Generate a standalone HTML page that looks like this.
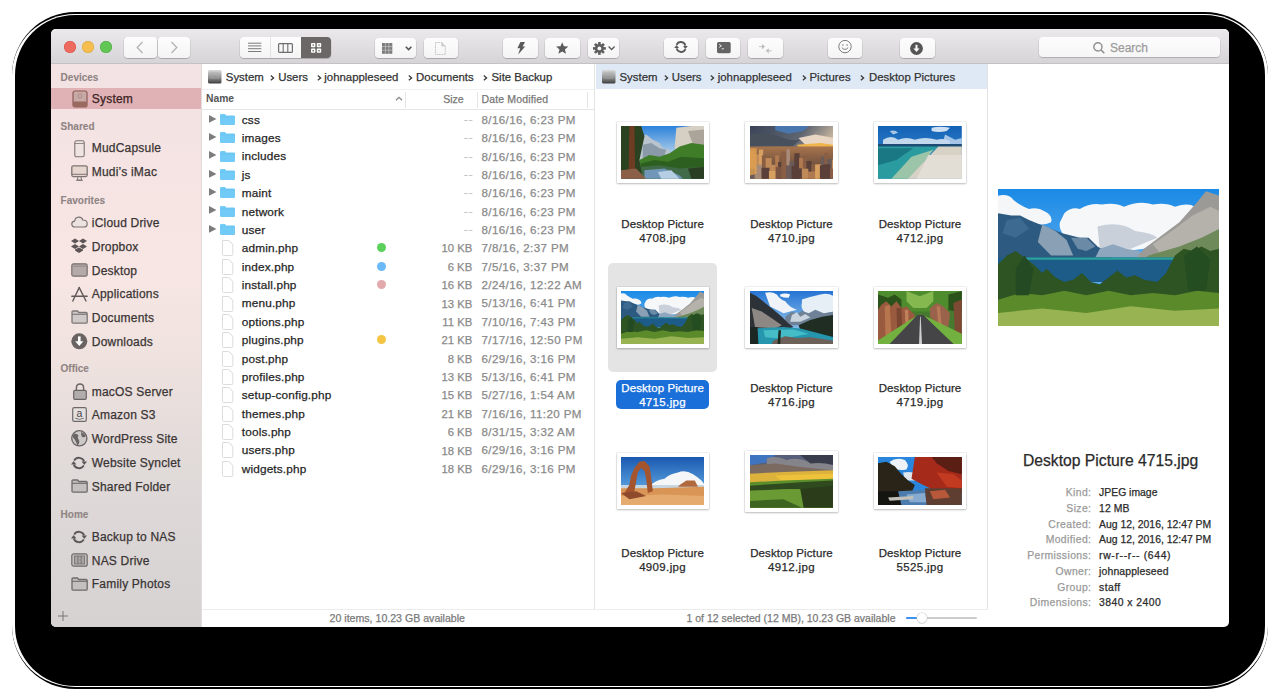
<!DOCTYPE html>
<html><head><meta charset="utf-8"><style>
html,body{margin:0;padding:0;}
body{width:1279px;height:700px;position:relative;overflow:hidden;background:#fff;font-family:"Liberation Sans", sans-serif;}
.t{position:absolute;white-space:nowrap;-webkit-text-stroke:0.25px currentColor;}
.b{position:absolute;box-sizing:border-box;}
svg{position:absolute;overflow:visible;}
</style></head><body>

<div class="b" style="left:12px;top:12px;width:1256px;height:677px;border-top:2px solid #000;border-bottom:2px solid #000;border-left:0 solid #000;border-right:0 solid #000;border-radius:63px;"></div>
<div class="b" style="left:15px;top:15px;width:1250px;height:671px;background:#000;border-radius:60px;"></div>
<div class="b" style="left:51px;top:29px;width:1178px;height:598px;background:#fff;border-radius:5px;overflow:hidden;"></div>
<div class="b" style="left:51px;top:29px;width:1178px;height:35px;background:linear-gradient(#ebe9eb,#d6d4d6);border-top-left-radius:5px;border-top-right-radius:5px;border-bottom:1px solid #c4c2c4;"></div>
<div class="b" style="left:63.5px;top:41.2px;width:12px;height:12px;border-radius:50%;background:#ee6a5f;box-shadow:inset 0 0 0 0.5px #d65248;"></div>
<div class="b" style="left:81.8px;top:41.2px;width:12px;height:12px;border-radius:50%;background:#f5be4f;box-shadow:inset 0 0 0 0.5px #d8a23a;"></div>
<div class="b" style="left:100px;top:41.2px;width:12px;height:12px;border-radius:50%;background:#62c655;box-shadow:inset 0 0 0 0.5px #4ea83f;"></div>
<div class="b" style="left:124px;top:37px;width:33px;height:20.5px;background:linear-gradient(#fdfdfd,#f4f4f4);border-radius:4px;box-shadow:0 0.5px 0 0.5px rgba(0,0,0,0.13),0 1px 1px rgba(0,0,0,0.10);"></div>
<div class="b" style="left:158px;top:37px;width:32px;height:20.5px;background:linear-gradient(#fdfdfd,#f4f4f4);border-radius:4px;box-shadow:0 0.5px 0 0.5px rgba(0,0,0,0.13),0 1px 1px rgba(0,0,0,0.10);"></div>
<svg style="left:136px;top:41px" width="8" height="13"><path d="M6.5 1L1.2 6.5L6.5 12" fill="none" stroke="#b4b4b4" stroke-width="1.3"/></svg>
<svg style="left:170px;top:41px" width="8" height="13"><path d="M1.5 1L6.8 6.5L1.5 12" fill="none" stroke="#b4b4b4" stroke-width="1.3"/></svg>
<div class="b" style="left:240px;top:37px;width:91px;height:20.6px;background:linear-gradient(#fdfdfd,#f4f4f4);border-radius:4px;box-shadow:0 0.5px 0 0.5px rgba(0,0,0,0.13),0 1px 1px rgba(0,0,0,0.10);"></div>
<div class="b" style="left:270px;top:37px;width:1px;height:20.6px;background:#e3e3e3;"></div>
<div class="b" style="left:300.7px;top:37px;width:30.30000000000001px;height:20.6px;background:#6b6767;border-top-right-radius:4px;border-bottom-right-radius:4px;"></div>
<svg style="left:248px;top:42px" width="14" height="11"><path d="M0 1.2H13.3M0 3.9H13.3M0 6.7H13.3M0 9.5H13.3" stroke="#7a7a7a" stroke-width="1"/></svg>
<svg style="left:278px;top:42.5px" width="15" height="10"><rect x="0.6" y="0.6" width="13.8" height="8.8" rx="1" fill="none" stroke="#6e6e6e" stroke-width="1.2"/><path d="M5.2 0.6V9.4M9.8 0.6V9.4" stroke="#6e6e6e" stroke-width="1.1"/></svg>
<svg style="left:310.5px;top:42.8px" width="11" height="10"><g fill="#fff"><rect x="0" y="0" width="4.4" height="4.2" rx="0.8"/><rect x="5.8" y="0" width="4.4" height="4.2" rx="0.8"/><rect x="0" y="5.6" width="4.4" height="4.2" rx="0.8"/><rect x="5.8" y="5.6" width="4.4" height="4.2" rx="0.8"/></g><g fill="#6b6767"><rect x="1.5" y="1.4" width="1.4" height="1.4"/><rect x="7.3" y="1.4" width="1.4" height="1.4"/><rect x="1.5" y="7" width="1.4" height="1.4"/><rect x="7.3" y="7" width="1.4" height="1.4"/></g></svg>
<div class="b" style="left:375px;top:38px;width:41px;height:19.799999999999997px;background:linear-gradient(#fdfdfd,#f4f4f4);border-radius:4px;box-shadow:0 0.5px 0 0.5px rgba(0,0,0,0.13),0 1px 1px rgba(0,0,0,0.10);"></div>
<svg style="left:381.7px;top:43.2px" width="11" height="11"><rect x="0" y="0" width="10.3" height="10.8" fill="#7c7c7c"/><path d="M0 3.6H10.3M0 7.2H10.3M3.4 0V10.8M6.9 0V10.8" stroke="#c9c9c9" stroke-width="0.7"/></svg>
<svg style="left:405px;top:45.8px" width="8" height="5"><path d="M0.8 0.8L3.6 3.6L6.4 0.8" fill="none" stroke="#555" stroke-width="1.6"/></svg>
<div class="b" style="left:424px;top:38px;width:34.30000000000001px;height:19.799999999999997px;background:linear-gradient(#fdfdfd,#f4f4f4);border-radius:4px;box-shadow:0 0.5px 0 0.5px rgba(0,0,0,0.13),0 1px 1px rgba(0,0,0,0.10);"></div>
<svg style="left:435px;top:41.5px" width="11" height="13"><path d="M0.5 0.5H6.8L10.3 4V12.5H0.5Z" fill="none" stroke="#c4c4c4" stroke-width="1" stroke-dasharray="1.2 0.6"/><path d="M6.8 0.5V4H10.3" fill="#d0d0d0" stroke="#c4c4c4" stroke-width="0.8"/></svg>
<div class="b" style="left:503px;top:38px;width:34.60000000000002px;height:19.5px;background:linear-gradient(#fdfdfd,#f4f4f4);border-radius:4px;box-shadow:0 0.5px 0 0.5px rgba(0,0,0,0.13),0 1px 1px rgba(0,0,0,0.10);"></div>
<svg style="left:516.5px;top:41.8px" width="8" height="13"><path d="M3.4 0H8L5.6 4.5H8.2L1.2 12.4L3.2 6.3H0.4Z" fill="#5a5a5a"/></svg>
<div class="b" style="left:545px;top:38px;width:35px;height:19.5px;background:linear-gradient(#fdfdfd,#f4f4f4);border-radius:4px;box-shadow:0 0.5px 0 0.5px rgba(0,0,0,0.13),0 1px 1px rgba(0,0,0,0.10);"></div>
<svg style="left:556px;top:42px" width="13" height="13"><path d="M6.2 0.2L7.9 4.3L12.3 4.6L8.9 7.4L10 11.8L6.2 9.4L2.4 11.8L3.5 7.4L0.1 4.6L4.5 4.3Z" fill="#5a5a5a"/></svg>
<div class="b" style="left:587.8px;top:38px;width:31.40000000000009px;height:19.5px;background:linear-gradient(#fdfdfd,#f4f4f4);border-radius:4px;box-shadow:0 0.5px 0 0.5px rgba(0,0,0,0.13),0 1px 1px rgba(0,0,0,0.10);"></div>
<svg style="left:592.6px;top:41.8px" width="13" height="13" viewBox="0 0 13 13"><g fill="#5e5e5e" transform="translate(6.4 6.4)"><rect x="-1.3" y="-6.4" width="2.6" height="3" transform="rotate(0)"/><rect x="-1.3" y="-6.4" width="2.6" height="3" transform="rotate(45)"/><rect x="-1.3" y="-6.4" width="2.6" height="3" transform="rotate(90)"/><rect x="-1.3" y="-6.4" width="2.6" height="3" transform="rotate(135)"/><rect x="-1.3" y="-6.4" width="2.6" height="3" transform="rotate(180)"/><rect x="-1.3" y="-6.4" width="2.6" height="3" transform="rotate(225)"/><rect x="-1.3" y="-6.4" width="2.6" height="3" transform="rotate(270)"/><rect x="-1.3" y="-6.4" width="2.6" height="3" transform="rotate(315)"/><circle r="4.4"/></g><circle cx="6.4" cy="6.4" r="1.9" fill="#f8f8f8"/></svg>
<svg style="left:608px;top:46px" width="8" height="5"><path d="M0.6 0.6L3.6 3.6L6.6 0.6" fill="none" stroke="#5e5e5e" stroke-width="1.4"/></svg>
<div class="b" style="left:664px;top:38px;width:34px;height:19.6px;background:linear-gradient(#fdfdfd,#f4f4f4);border-radius:4px;box-shadow:0 0.5px 0 0.5px rgba(0,0,0,0.13),0 1px 1px rgba(0,0,0,0.10);"></div>
<svg style="left:674px;top:41.4px" width="14" height="12" viewBox="0 0 14 12"><path d="M11.3 4.6A4.6 4.6 0 0 0 2.6 3.8" fill="none" stroke="#5a5a5a" stroke-width="1.9"/><path d="M2.7 7.4A4.6 4.6 0 0 0 11.4 8.2" fill="none" stroke="#5a5a5a" stroke-width="1.9"/><path d="M9 4.9H13.8L11.4 8Z" fill="#5a5a5a"/><path d="M0.2 7.1H5L2.6 4Z" fill="#5a5a5a"/></svg>
<div class="b" style="left:706.2px;top:38px;width:34.09999999999991px;height:19.6px;background:linear-gradient(#fdfdfd,#f4f4f4);border-radius:4px;box-shadow:0 0.5px 0 0.5px rgba(0,0,0,0.13),0 1px 1px rgba(0,0,0,0.10);"></div>
<svg style="left:716.6px;top:41.6px" width="14" height="12"><rect x="0" y="0" width="13.7" height="11.2" rx="1.6" fill="#646464"/><path d="M2.2 2.2L4.4 3.8L2.2 5.4" fill="none" stroke="#fff" stroke-width="0.9"/><path d="M4.6 6.8H7" stroke="#fff" stroke-width="0.8"/></svg>
<div class="b" style="left:748.4px;top:38px;width:34.60000000000002px;height:19.6px;background:linear-gradient(#fdfdfd,#f4f4f4);border-radius:4px;box-shadow:0 0.5px 0 0.5px rgba(0,0,0,0.13),0 1px 1px rgba(0,0,0,0.10);"></div>
<svg style="left:759px;top:43.5px" width="13" height="10"><path d="M0 2.6H3.2M9.6 6.8H12.8" stroke="#c2c2c2" stroke-width="1"/><path d="M3 0L6 2.6L3 5.2Z M9.8 4.2L6.8 6.8L9.8 9.4Z" fill="#bdbdbd"/></svg>
<div class="b" style="left:827.5px;top:38px;width:34.5px;height:19.6px;background:linear-gradient(#fdfdfd,#f4f4f4);border-radius:4px;box-shadow:0 0.5px 0 0.5px rgba(0,0,0,0.13),0 1px 1px rgba(0,0,0,0.10);"></div>
<svg style="left:837.5px;top:40.3px" width="14" height="14"><circle cx="7" cy="6.6" r="6.2" fill="none" stroke="#7c7c7c" stroke-width="1"/><circle cx="4.9" cy="5" r="0.8" fill="#7c7c7c"/><circle cx="9.1" cy="5" r="0.8" fill="#7c7c7c"/><path d="M3.8 7.6Q7 11.2 10.2 7.6" fill="none" stroke="#7c7c7c" stroke-width="1"/></svg>
<div class="b" style="left:900.3px;top:38px;width:34.5px;height:19.6px;background:linear-gradient(#fdfdfd,#f4f4f4);border-radius:4px;box-shadow:0 0.5px 0 0.5px rgba(0,0,0,0.13),0 1px 1px rgba(0,0,0,0.10);"></div>
<svg style="left:910.3px;top:41.5px" width="14" height="14"><circle cx="6.5" cy="6.5" r="6.4" fill="#555"/><path d="M6.5 2.8V7.2" stroke="#fff" stroke-width="2"/><path d="M3.4 6.6H9.6L6.5 10Z" fill="#fff"/></svg>
<div class="b" style="left:1039.3px;top:37.2px;width:181.10000000000014px;height:20.0px;background:linear-gradient(#fcfcfc,#f6f6f6);border-radius:4px;box-shadow:0 0.5px 0 0.5px rgba(0,0,0,0.12),0 1px 1px rgba(0,0,0,0.08);"></div>
<svg style="left:1093px;top:42.3px" width="13" height="12"><circle cx="4.9" cy="4.9" r="4.1" fill="none" stroke="#8e8e8e" stroke-width="1.4"/><path d="M7.8 7.8L11.3 11.3" stroke="#8e8e8e" stroke-width="1.6"/></svg>
<div class="t" style="left:1110.00px;top:40.04px;font-size:12px;line-height:16px;color:#9c9c9c;font-weight:normal;">Search</div>
<div class="b" style="left:51px;top:64px;width:151px;height:563px;background:linear-gradient(#f3e2e3 0%,#f7e6e3 38%,#efe2df 52%,#e0dad9 72%,#d6d2d2 100%);border-right:1px solid #e2dcdc;border-bottom-left-radius:5px;"></div>
<div class="b" style="left:51px;top:88px;width:150px;height:21px;background:#e0b1b5;"></div>
<div class="t" style="left:60.60px;top:69.94px;font-size:10px;line-height:16px;color:#8f8483;font-weight:bold;-webkit-text-stroke:0.1px currentColor;">Devices</div>
<div class="t" style="left:60.60px;top:119.34px;font-size:10px;line-height:16px;color:#8f8483;font-weight:bold;-webkit-text-stroke:0.1px currentColor;">Shared</div>
<div class="t" style="left:60.60px;top:192.53px;font-size:10px;line-height:16px;color:#8f8483;font-weight:bold;-webkit-text-stroke:0.1px currentColor;">Favorites</div>
<div class="t" style="left:60.60px;top:361.44px;font-size:10px;line-height:16px;color:#8f8483;font-weight:bold;-webkit-text-stroke:0.1px currentColor;">Office</div>
<div class="t" style="left:60.60px;top:506.54px;font-size:10px;line-height:16px;color:#8f8483;font-weight:bold;-webkit-text-stroke:0.1px currentColor;">Home</div>
<div class="t" style="left:91.80px;top:91.24px;font-size:12px;line-height:16px;color:#3b1f1f;font-weight:normal;letter-spacing:0.2px;">System</div>
<div class="t" style="left:91.80px;top:140.44px;font-size:12px;line-height:16px;color:#3a3434;font-weight:normal;letter-spacing:0.2px;">MudCapsule</div>
<div class="t" style="left:91.80px;top:164.44px;font-size:12px;line-height:16px;color:#3a3434;font-weight:normal;letter-spacing:0.2px;">Mudi&rsquo;s iMac</div>
<div class="t" style="left:91.80px;top:214.94px;font-size:12px;line-height:16px;color:#3a3434;font-weight:normal;letter-spacing:0.2px;">iCloud Drive</div>
<div class="t" style="left:91.80px;top:238.64px;font-size:12px;line-height:16px;color:#3a3434;font-weight:normal;letter-spacing:0.2px;">Dropbox</div>
<div class="t" style="left:91.80px;top:262.64px;font-size:12px;line-height:16px;color:#3a3434;font-weight:normal;letter-spacing:0.2px;">Desktop</div>
<div class="t" style="left:91.80px;top:286.14px;font-size:12px;line-height:16px;color:#3a3434;font-weight:normal;letter-spacing:0.2px;">Applications</div>
<div class="t" style="left:91.80px;top:310.14px;font-size:12px;line-height:16px;color:#3a3434;font-weight:normal;letter-spacing:0.2px;">Documents</div>
<div class="t" style="left:91.80px;top:334.14px;font-size:12px;line-height:16px;color:#3a3434;font-weight:normal;letter-spacing:0.2px;">Downloads</div>
<div class="t" style="left:91.80px;top:383.84px;font-size:12px;line-height:16px;color:#3a3434;font-weight:normal;letter-spacing:0.2px;">macOS Server</div>
<div class="t" style="left:91.80px;top:407.34px;font-size:12px;line-height:16px;color:#3a3434;font-weight:normal;letter-spacing:0.2px;">Amazon S3</div>
<div class="t" style="left:91.80px;top:430.94px;font-size:12px;line-height:16px;color:#3a3434;font-weight:normal;letter-spacing:0.2px;">WordPress Site</div>
<div class="t" style="left:91.80px;top:454.94px;font-size:12px;line-height:16px;color:#3a3434;font-weight:normal;letter-spacing:0.2px;">Website Synclet</div>
<div class="t" style="left:91.80px;top:478.94px;font-size:12px;line-height:16px;color:#3a3434;font-weight:normal;letter-spacing:0.2px;">Shared Folder</div>
<div class="t" style="left:91.80px;top:528.54px;font-size:12px;line-height:16px;color:#3a3434;font-weight:normal;letter-spacing:0.2px;">Backup to NAS</div>
<div class="t" style="left:91.80px;top:552.74px;font-size:12px;line-height:16px;color:#3a3434;font-weight:normal;letter-spacing:0.2px;">NAS Drive</div>
<div class="t" style="left:91.80px;top:576.24px;font-size:12px;line-height:16px;color:#3a3434;font-weight:normal;letter-spacing:0.2px;">Family Photos</div>
<svg style="left:72px;top:90px" width="16" height="18" viewBox="0 0 16 18"><rect x="1" y="1" width="14" height="16" rx="2" fill="#c9a9a6" stroke="#8b5d55" stroke-width="1.2"/><rect x="1" y="11.5" width="14" height="5.5" fill="#9a6a60"/><circle cx="8" cy="6" r="2" fill="none" stroke="#a88a86" stroke-width="0.8"/></svg>
<svg style="left:74px;top:139.5px" width="11" height="18" viewBox="0 0 11 18"><rect x="0.8" y="0.8" width="9.4" height="16" rx="1.8" fill="#efe4e2" stroke="#7d7473" stroke-width="1.1"/><path d="M0.8 3.5H10.2" stroke="#7d7473" stroke-width="0.8"/></svg>
<svg style="left:71px;top:164.5px" width="17" height="17" viewBox="0 0 17 17"><rect x="0.8" y="0.8" width="15.4" height="10.8" rx="1.5" fill="#e6d6cf" stroke="#7d7473" stroke-width="1.3"/><path d="M0.8 9.3H16.2" stroke="#7d7473" stroke-width="1"/><path d="M7 11.8L6.4 15H10.6L10 11.8" fill="none" stroke="#7d7473" stroke-width="1"/><path d="M5 15.4H12" stroke="#7d7473" stroke-width="0.9"/></svg>
<svg style="left:71px;top:215px" width="17" height="13" viewBox="0 0 17 13"><path d="M4 12Q0.8 12 0.8 9Q0.8 6.4 3.6 6.1Q4.2 2.6 7.6 2.2Q10.8 2 11.8 5Q16.2 5 16.2 8.7Q16.2 12 12.8 12Z" fill="#ece2e0" stroke="#7d7473" stroke-width="1.2"/></svg>
<svg style="left:71.4px;top:238px" width="16" height="16" viewBox="0 0 16 16"><g fill="#5d5555"><path d="M4 0.5L8 3L4 5.5L0 3Z"/><path d="M12 0.5L16 3L12 5.5L8 3Z"/><path d="M4 6L8 8.5L4 11L0 8.5Z"/><path d="M12 6L16 8.5L12 11L8 8.5Z"/><path d="M4 11.6L8 9.4L12 11.6V12.4L8 15L4 12.4Z"/></g></svg>
<svg style="left:71px;top:263px" width="17" height="14" viewBox="0 0 17 14"><rect x="0.8" y="0.8" width="15.4" height="12.4" rx="1.8" fill="#b3aaa9" stroke="#7a7070" stroke-width="1.2"/><path d="M2 3.2H15" stroke="#8a8080" stroke-width="0.8"/></svg>
<svg style="left:71px;top:285.5px" width="17" height="16" viewBox="0 0 17 16"><g stroke="#625a5a" stroke-width="1.4" fill="none" stroke-linecap="round"><path d="M1.8 15L8.2 1.6"/><path d="M8.2 1.6L15 15"/><path d="M0.8 10.2H16.2"/></g></svg>
<svg style="left:71px;top:310px" width="17" height="14" viewBox="0 0 17 14"><path d="M1 2.2Q1 1 2.2 1H6.5L7.8 2.5H15Q16.2 2.5 16.2 3.7V12Q16.2 13.2 15 13.2H2.2Q1 13.2 1 12Z" fill="#cfc9c8" stroke="#7d7777" stroke-width="1.3"/><path d="M1 4.3H16.2" stroke="#7d7777" stroke-width="1.1"/></svg>
<svg style="left:71px;top:332.8px" width="17" height="17" viewBox="0 0 17 17"><circle cx="8.3" cy="8.3" r="8" fill="#6a6363"/><path d="M8.3 3.4V9" stroke="#fff" stroke-width="2.6"/><path d="M4.2 8.2H12.4L8.3 13Z" fill="#fff"/></svg>
<svg style="left:72.5px;top:382.5px" width="14" height="17" viewBox="0 0 14 17"><path d="M3.4 7.5V4.9Q3.4 1 7 1Q10.6 1 10.6 4.9V7.5" fill="none" stroke="#6a6464" stroke-width="1.4"/><rect x="0.7" y="7.3" width="12.6" height="9" rx="1.3" fill="#b2adad" stroke="#6a6464" stroke-width="1.2"/></svg>
<svg style="left:72px;top:407.2px" width="15" height="15" viewBox="0 0 15 15"><rect x="0.7" y="0.7" width="13.6" height="13.6" rx="1.6" fill="#e4e0e0" stroke="#6e6868" stroke-width="1.2"/><text x="7.5" y="9.6" font-family="Liberation Sans" font-size="10.5" text-anchor="middle" fill="#4a4545">a</text><path d="M3.2 11.2Q7.5 13.4 11.8 11.2" fill="none" stroke="#6e6868" stroke-width="0.9"/></svg>
<svg style="left:71px;top:430.2px" width="17" height="17" viewBox="0 0 17 17"><circle cx="8.3" cy="8.3" r="7.6" fill="#cdc9c9" stroke="#6a6464" stroke-width="1.3"/><path d="M3 4Q6 3 7.5 5.5Q6 8 8 10Q9 13 6.5 15.5Q5 12 4 10Q2.5 8 1.5 6.5Z" fill="#6a6464"/><path d="M10 2Q13 3 15 6Q13 8 11 7Q10 5 10 2Z" fill="#6a6464"/></svg>
<svg style="left:71.4px;top:455.8px" width="16" height="14" viewBox="0 0 16 14"><g fill="none" stroke="#5d5858" stroke-width="1.8"><path d="M13.2 5.4A5.6 5.6 0 0 0 3.2 4.4"/><path d="M2.8 8.6A5.6 5.6 0 0 0 12.8 9.6"/></g><path d="M10.6 5.6H16L13.3 9Z" fill="#5d5858"/><path d="M0 8.4H5.4L2.7 5Z" fill="#5d5858"/></svg>
<svg style="left:71px;top:479px" width="17" height="14" viewBox="0 0 17 14"><path d="M1 2.2Q1 1 2.2 1H6.5L7.8 2.5H15Q16.2 2.5 16.2 3.7V12Q16.2 13.2 15 13.2H2.2Q1 13.2 1 12Z" fill="#c4c0c0" stroke="#6f6b6b" stroke-width="1.3"/><path d="M1 4.3H16.2" stroke="#6f6b6b" stroke-width="1.1"/></svg>
<svg style="left:71.4px;top:529.6px" width="16" height="14" viewBox="0 0 16 14"><g fill="none" stroke="#5d5858" stroke-width="1.8"><path d="M13.2 5.4A5.6 5.6 0 0 0 3.2 4.4"/><path d="M2.8 8.6A5.6 5.6 0 0 0 12.8 9.6"/></g><path d="M10.6 5.6H16L13.3 9Z" fill="#5d5858"/><path d="M0 8.4H5.4L2.7 5Z" fill="#5d5858"/></svg>
<svg style="left:71px;top:553px" width="17" height="14" viewBox="0 0 17 14"><rect x="0.8" y="0.8" width="15.4" height="12.4" rx="2" fill="#c4c0c0" stroke="#6f6b6b" stroke-width="1.2"/><rect x="3.6" y="3" width="9.8" height="8" fill="#a8a4a4" stroke="#6f6b6b" stroke-width="0.8"/><path d="M6.9 3V11M10.2 3V11" stroke="#6f6b6b" stroke-width="0.8"/></svg>
<svg style="left:71px;top:576.6px" width="17" height="14" viewBox="0 0 17 14"><path d="M1 2.2Q1 1 2.2 1H6.5L7.8 2.5H15Q16.2 2.5 16.2 3.7V12Q16.2 13.2 15 13.2H2.2Q1 13.2 1 12Z" fill="#c4c0c0" stroke="#6f6b6b" stroke-width="1.3"/><path d="M1 4.3H16.2" stroke="#6f6b6b" stroke-width="1.1"/></svg>
<svg style="left:58px;top:611px" width="10" height="10"><path d="M5 0V10M0 5H10" stroke="#777" stroke-width="1"/></svg>
<div class="b" style="left:202px;top:64px;width:393px;height:26px;background:#fff;border-bottom:1px solid #f0f0f0;"></div>
<div class="b" style="left:202px;top:90px;width:393px;height:20px;background:#fff;border-bottom:1px solid #e6e6e6;"></div>
<div class="b" style="left:594px;top:64px;width:2px;height:563px;background:#e3e3e3;width:1px;"></div>
<div class="t" style="left:225.80px;top:69.05px;font-size:11.4px;line-height:16px;color:#333;font-weight:normal;">System</div>
<div class="t" style="left:278.20px;top:69.05px;font-size:11.4px;line-height:16px;color:#333;font-weight:normal;">Users</div>
<div class="t" style="left:324.30px;top:69.05px;font-size:11.4px;line-height:16px;color:#333;font-weight:normal;">johnappleseed</div>
<div class="t" style="left:416.10px;top:69.05px;font-size:11.4px;line-height:16px;color:#333;font-weight:normal;">Documents</div>
<div class="t" style="left:491.50px;top:69.05px;font-size:11.4px;line-height:16px;color:#333;font-weight:normal;">Site Backup</div>
<svg style="left:270.40px;top:75px" width="5" height="6"><path d="M0.8 0.6L3.6 2.9L0.8 5.2" fill="none" stroke="#3a3a3a" stroke-width="1.3"/></svg>
<svg style="left:316.50px;top:75px" width="5" height="6"><path d="M0.8 0.6L3.6 2.9L0.8 5.2" fill="none" stroke="#3a3a3a" stroke-width="1.3"/></svg>
<svg style="left:407.80px;top:75px" width="5" height="6"><path d="M0.8 0.6L3.6 2.9L0.8 5.2" fill="none" stroke="#3a3a3a" stroke-width="1.3"/></svg>
<svg style="left:483.30px;top:75px" width="5" height="6"><path d="M0.8 0.6L3.6 2.9L0.8 5.2" fill="none" stroke="#3a3a3a" stroke-width="1.3"/></svg>
<svg style="left:208px;top:70px" width="14" height="14" viewBox="0 0 14 14"><defs><linearGradient id="dg" x1="0" y1="0" x2="0" y2="1"><stop offset="0" stop-color="#d8d8d8"/><stop offset="0.6" stop-color="#8a8a8a"/><stop offset="1" stop-color="#3a3a3a"/></linearGradient></defs><rect x="0" y="0" width="13.5" height="13.6" rx="1.6" fill="url(#dg)"/><rect x="3" y="3" width="7.5" height="5" fill="none" stroke="#aaa" stroke-width="0.6"/></svg>
<div class="t" style="left:206.00px;top:91.23px;font-size:10.3px;line-height:16px;color:#555;font-weight:bold;-webkit-text-stroke:0;">Name</div>
<div class="t" style="right:815.40px;top:91.16px;font-size:10.5px;line-height:16px;color:#777;font-weight:normal;text-align:right;">Size</div>
<div class="t" style="left:481.50px;top:91.16px;font-size:10.5px;line-height:16px;color:#777;font-weight:normal;letter-spacing:0.15px;">Date Modified</div>
<div class="b" style="left:405px;top:92px;width:1px;height:16px;background:#e6e6e6;"></div>
<div class="b" style="left:477px;top:92px;width:1px;height:16px;background:#e6e6e6;"></div>
<div class="b" style="left:587px;top:92px;width:1px;height:16px;background:#e6e6e6;"></div>
<svg style="left:395px;top:96px" width="8" height="5"><path d="M1 4.3L4 1.3L7 4.3" fill="none" stroke="#8a8a8a" stroke-width="1.3"/></svg>
<div class="t" style="left:241.80px;top:111.71px;font-size:11.8px;line-height:16px;color:#262626;font-weight:normal;letter-spacing:0.15px;">css</div>
<div class="t" style="right:805.60px;top:110.88px;font-size:11.3px;line-height:16px;color:#c2c2c2;font-weight:normal;text-align:right;letter-spacing:1px;">--</div>
<div class="t" style="left:481.50px;top:111.78px;font-size:11.6px;line-height:16px;color:#8a8a8a;font-weight:normal;letter-spacing:0.38px;">8/16/16, 6:23 PM</div>
<svg style="left:208.8px;top:114.60px" width="8" height="8"><path d="M0 0L7.4 3.9L0 7.8Z" fill="#7c7c7c"/></svg>
<svg style="left:220px;top:113.80px" width="15" height="11"><path d="M0 1.2Q0 0 1.2 0H5L6.2 1.5H13.8Q15 1.5 15 2.7V9.8Q15 11 13.8 11H1.2Q0 11 0 9.8Z" fill="#72cbf6"/><rect x="0" y="2.6" width="15" height="0.6" fill="#62bdf0"/></svg>
<div class="t" style="left:241.80px;top:130.08px;font-size:11.8px;line-height:16px;color:#262626;font-weight:normal;letter-spacing:0.15px;">images</div>
<div class="t" style="right:805.60px;top:129.25px;font-size:11.3px;line-height:16px;color:#c2c2c2;font-weight:normal;text-align:right;letter-spacing:1px;">--</div>
<div class="t" style="left:481.50px;top:130.15px;font-size:11.6px;line-height:16px;color:#8a8a8a;font-weight:normal;letter-spacing:0.38px;">8/16/16, 6:23 PM</div>
<svg style="left:208.8px;top:132.97px" width="8" height="8"><path d="M0 0L7.4 3.9L0 7.8Z" fill="#7c7c7c"/></svg>
<svg style="left:220px;top:132.17px" width="15" height="11"><path d="M0 1.2Q0 0 1.2 0H5L6.2 1.5H13.8Q15 1.5 15 2.7V9.8Q15 11 13.8 11H1.2Q0 11 0 9.8Z" fill="#72cbf6"/><rect x="0" y="2.6" width="15" height="0.6" fill="#62bdf0"/></svg>
<div class="t" style="left:241.80px;top:148.45px;font-size:11.8px;line-height:16px;color:#262626;font-weight:normal;letter-spacing:0.15px;">includes</div>
<div class="t" style="right:805.60px;top:147.62px;font-size:11.3px;line-height:16px;color:#c2c2c2;font-weight:normal;text-align:right;letter-spacing:1px;">--</div>
<div class="t" style="left:481.50px;top:148.52px;font-size:11.6px;line-height:16px;color:#8a8a8a;font-weight:normal;letter-spacing:0.38px;">8/16/16, 6:23 PM</div>
<svg style="left:208.8px;top:151.34px" width="8" height="8"><path d="M0 0L7.4 3.9L0 7.8Z" fill="#7c7c7c"/></svg>
<svg style="left:220px;top:150.54px" width="15" height="11"><path d="M0 1.2Q0 0 1.2 0H5L6.2 1.5H13.8Q15 1.5 15 2.7V9.8Q15 11 13.8 11H1.2Q0 11 0 9.8Z" fill="#72cbf6"/><rect x="0" y="2.6" width="15" height="0.6" fill="#62bdf0"/></svg>
<div class="t" style="left:241.80px;top:166.82px;font-size:11.8px;line-height:16px;color:#262626;font-weight:normal;letter-spacing:0.15px;">js</div>
<div class="t" style="right:805.60px;top:165.99px;font-size:11.3px;line-height:16px;color:#c2c2c2;font-weight:normal;text-align:right;letter-spacing:1px;">--</div>
<div class="t" style="left:481.50px;top:166.89px;font-size:11.6px;line-height:16px;color:#8a8a8a;font-weight:normal;letter-spacing:0.38px;">8/16/16, 6:23 PM</div>
<svg style="left:208.8px;top:169.71px" width="8" height="8"><path d="M0 0L7.4 3.9L0 7.8Z" fill="#7c7c7c"/></svg>
<svg style="left:220px;top:168.91px" width="15" height="11"><path d="M0 1.2Q0 0 1.2 0H5L6.2 1.5H13.8Q15 1.5 15 2.7V9.8Q15 11 13.8 11H1.2Q0 11 0 9.8Z" fill="#72cbf6"/><rect x="0" y="2.6" width="15" height="0.6" fill="#62bdf0"/></svg>
<div class="t" style="left:241.80px;top:185.19px;font-size:11.8px;line-height:16px;color:#262626;font-weight:normal;letter-spacing:0.15px;">maint</div>
<div class="t" style="right:805.60px;top:184.36px;font-size:11.3px;line-height:16px;color:#c2c2c2;font-weight:normal;text-align:right;letter-spacing:1px;">--</div>
<div class="t" style="left:481.50px;top:185.26px;font-size:11.6px;line-height:16px;color:#8a8a8a;font-weight:normal;letter-spacing:0.38px;">8/16/16, 6:23 PM</div>
<svg style="left:208.8px;top:188.08px" width="8" height="8"><path d="M0 0L7.4 3.9L0 7.8Z" fill="#7c7c7c"/></svg>
<svg style="left:220px;top:187.28px" width="15" height="11"><path d="M0 1.2Q0 0 1.2 0H5L6.2 1.5H13.8Q15 1.5 15 2.7V9.8Q15 11 13.8 11H1.2Q0 11 0 9.8Z" fill="#72cbf6"/><rect x="0" y="2.6" width="15" height="0.6" fill="#62bdf0"/></svg>
<div class="t" style="left:241.80px;top:203.56px;font-size:11.8px;line-height:16px;color:#262626;font-weight:normal;letter-spacing:0.15px;">network</div>
<div class="t" style="right:805.60px;top:202.73px;font-size:11.3px;line-height:16px;color:#c2c2c2;font-weight:normal;text-align:right;letter-spacing:1px;">--</div>
<div class="t" style="left:481.50px;top:203.63px;font-size:11.6px;line-height:16px;color:#8a8a8a;font-weight:normal;letter-spacing:0.38px;">8/16/16, 6:23 PM</div>
<svg style="left:208.8px;top:206.45px" width="8" height="8"><path d="M0 0L7.4 3.9L0 7.8Z" fill="#7c7c7c"/></svg>
<svg style="left:220px;top:205.65px" width="15" height="11"><path d="M0 1.2Q0 0 1.2 0H5L6.2 1.5H13.8Q15 1.5 15 2.7V9.8Q15 11 13.8 11H1.2Q0 11 0 9.8Z" fill="#72cbf6"/><rect x="0" y="2.6" width="15" height="0.6" fill="#62bdf0"/></svg>
<div class="t" style="left:241.80px;top:221.93px;font-size:11.8px;line-height:16px;color:#262626;font-weight:normal;letter-spacing:0.15px;">user</div>
<div class="t" style="right:805.60px;top:221.10px;font-size:11.3px;line-height:16px;color:#c2c2c2;font-weight:normal;text-align:right;letter-spacing:1px;">--</div>
<div class="t" style="left:481.50px;top:222.00px;font-size:11.6px;line-height:16px;color:#8a8a8a;font-weight:normal;letter-spacing:0.38px;">8/16/16, 6:23 PM</div>
<svg style="left:208.8px;top:224.82px" width="8" height="8"><path d="M0 0L7.4 3.9L0 7.8Z" fill="#7c7c7c"/></svg>
<svg style="left:220px;top:224.02px" width="15" height="11"><path d="M0 1.2Q0 0 1.2 0H5L6.2 1.5H13.8Q15 1.5 15 2.7V9.8Q15 11 13.8 11H1.2Q0 11 0 9.8Z" fill="#72cbf6"/><rect x="0" y="2.6" width="15" height="0.6" fill="#62bdf0"/></svg>
<div class="t" style="left:241.80px;top:240.30px;font-size:11.8px;line-height:16px;color:#262626;font-weight:normal;letter-spacing:0.15px;">admin.php</div>
<div class="t" style="right:806.80px;top:240.47px;font-size:11.3px;line-height:16px;color:#8a8a8a;font-weight:normal;text-align:right;">10 KB</div>
<div class="t" style="left:481.50px;top:240.37px;font-size:11.6px;line-height:16px;color:#8a8a8a;font-weight:normal;letter-spacing:0.38px;">7/8/16, 2:37 PM</div>
<svg style="left:221px;top:240.39px" width="13" height="16"><path d="M1.5 0.5H7.8L11.8 4.5V14.5Q11.8 15.5 10.8 15.5H2.5Q1.5 15.5 1.5 14.5Z" fill="#fff" stroke="#dcdcdc" stroke-width="1"/><path d="M7.8 0.5L11.8 4.5" fill="none" stroke="#e4e4e4" stroke-width="1"/></svg>
<div class="b" style="left:376.9px;top:243.39px;width:9px;height:9px;border-radius:50%;background:#5bd15b;"></div>
<div class="t" style="left:241.80px;top:258.67px;font-size:11.8px;line-height:16px;color:#262626;font-weight:normal;letter-spacing:0.15px;">index.php</div>
<div class="t" style="right:806.80px;top:258.84px;font-size:11.3px;line-height:16px;color:#8a8a8a;font-weight:normal;text-align:right;">6 KB</div>
<div class="t" style="left:481.50px;top:258.74px;font-size:11.6px;line-height:16px;color:#8a8a8a;font-weight:normal;letter-spacing:0.38px;">7/5/16, 3:37 PM</div>
<svg style="left:221px;top:258.76px" width="13" height="16"><path d="M1.5 0.5H7.8L11.8 4.5V14.5Q11.8 15.5 10.8 15.5H2.5Q1.5 15.5 1.5 14.5Z" fill="#fff" stroke="#dcdcdc" stroke-width="1"/><path d="M7.8 0.5L11.8 4.5" fill="none" stroke="#e4e4e4" stroke-width="1"/></svg>
<div class="b" style="left:376.9px;top:261.76px;width:9px;height:9px;border-radius:50%;background:#6cb9f7;"></div>
<div class="t" style="left:241.80px;top:277.04px;font-size:11.8px;line-height:16px;color:#262626;font-weight:normal;letter-spacing:0.15px;">install.php</div>
<div class="t" style="right:806.80px;top:277.21px;font-size:11.3px;line-height:16px;color:#8a8a8a;font-weight:normal;text-align:right;">16 KB</div>
<div class="t" style="left:481.50px;top:277.11px;font-size:11.6px;line-height:16px;color:#8a8a8a;font-weight:normal;letter-spacing:0.38px;">2/24/16, 12:22 AM</div>
<svg style="left:221px;top:277.13px" width="13" height="16"><path d="M1.5 0.5H7.8L11.8 4.5V14.5Q11.8 15.5 10.8 15.5H2.5Q1.5 15.5 1.5 14.5Z" fill="#fff" stroke="#dcdcdc" stroke-width="1"/><path d="M7.8 0.5L11.8 4.5" fill="none" stroke="#e4e4e4" stroke-width="1"/></svg>
<div class="b" style="left:376.9px;top:280.13px;width:9px;height:9px;border-radius:50%;background:#e3aaad;"></div>
<div class="t" style="left:241.80px;top:295.41px;font-size:11.8px;line-height:16px;color:#262626;font-weight:normal;letter-spacing:0.15px;">menu.php</div>
<div class="t" style="right:806.80px;top:295.58px;font-size:11.3px;line-height:16px;color:#8a8a8a;font-weight:normal;text-align:right;">13 KB</div>
<div class="t" style="left:481.50px;top:295.48px;font-size:11.6px;line-height:16px;color:#8a8a8a;font-weight:normal;letter-spacing:0.38px;">5/13/16, 6:41 PM</div>
<svg style="left:221px;top:295.50px" width="13" height="16"><path d="M1.5 0.5H7.8L11.8 4.5V14.5Q11.8 15.5 10.8 15.5H2.5Q1.5 15.5 1.5 14.5Z" fill="#fff" stroke="#dcdcdc" stroke-width="1"/><path d="M7.8 0.5L11.8 4.5" fill="none" stroke="#e4e4e4" stroke-width="1"/></svg>
<div class="t" style="left:241.80px;top:313.78px;font-size:11.8px;line-height:16px;color:#262626;font-weight:normal;letter-spacing:0.15px;">options.php</div>
<div class="t" style="right:806.80px;top:313.95px;font-size:11.3px;line-height:16px;color:#8a8a8a;font-weight:normal;text-align:right;">11 KB</div>
<div class="t" style="left:481.50px;top:313.85px;font-size:11.6px;line-height:16px;color:#8a8a8a;font-weight:normal;letter-spacing:0.38px;">7/10/16, 7:43 PM</div>
<svg style="left:221px;top:313.87px" width="13" height="16"><path d="M1.5 0.5H7.8L11.8 4.5V14.5Q11.8 15.5 10.8 15.5H2.5Q1.5 15.5 1.5 14.5Z" fill="#fff" stroke="#dcdcdc" stroke-width="1"/><path d="M7.8 0.5L11.8 4.5" fill="none" stroke="#e4e4e4" stroke-width="1"/></svg>
<div class="t" style="left:241.80px;top:332.15px;font-size:11.8px;line-height:16px;color:#262626;font-weight:normal;letter-spacing:0.15px;">plugins.php</div>
<div class="t" style="right:806.80px;top:332.32px;font-size:11.3px;line-height:16px;color:#8a8a8a;font-weight:normal;text-align:right;">21 KB</div>
<div class="t" style="left:481.50px;top:332.22px;font-size:11.6px;line-height:16px;color:#8a8a8a;font-weight:normal;letter-spacing:0.38px;">7/17/16, 12:50 PM</div>
<svg style="left:221px;top:332.24px" width="13" height="16"><path d="M1.5 0.5H7.8L11.8 4.5V14.5Q11.8 15.5 10.8 15.5H2.5Q1.5 15.5 1.5 14.5Z" fill="#fff" stroke="#dcdcdc" stroke-width="1"/><path d="M7.8 0.5L11.8 4.5" fill="none" stroke="#e4e4e4" stroke-width="1"/></svg>
<div class="b" style="left:376.9px;top:335.24px;width:9px;height:9px;border-radius:50%;background:#f4c443;"></div>
<div class="t" style="left:241.80px;top:350.52px;font-size:11.8px;line-height:16px;color:#262626;font-weight:normal;letter-spacing:0.15px;">post.php</div>
<div class="t" style="right:806.80px;top:350.69px;font-size:11.3px;line-height:16px;color:#8a8a8a;font-weight:normal;text-align:right;">8 KB</div>
<div class="t" style="left:481.50px;top:350.59px;font-size:11.6px;line-height:16px;color:#8a8a8a;font-weight:normal;letter-spacing:0.38px;">6/29/16, 3:16 PM</div>
<svg style="left:221px;top:350.61px" width="13" height="16"><path d="M1.5 0.5H7.8L11.8 4.5V14.5Q11.8 15.5 10.8 15.5H2.5Q1.5 15.5 1.5 14.5Z" fill="#fff" stroke="#dcdcdc" stroke-width="1"/><path d="M7.8 0.5L11.8 4.5" fill="none" stroke="#e4e4e4" stroke-width="1"/></svg>
<div class="t" style="left:241.80px;top:368.89px;font-size:11.8px;line-height:16px;color:#262626;font-weight:normal;letter-spacing:0.15px;">profiles.php</div>
<div class="t" style="right:806.80px;top:369.06px;font-size:11.3px;line-height:16px;color:#8a8a8a;font-weight:normal;text-align:right;">13 KB</div>
<div class="t" style="left:481.50px;top:368.96px;font-size:11.6px;line-height:16px;color:#8a8a8a;font-weight:normal;letter-spacing:0.38px;">5/13/16, 6:41 PM</div>
<svg style="left:221px;top:368.98px" width="13" height="16"><path d="M1.5 0.5H7.8L11.8 4.5V14.5Q11.8 15.5 10.8 15.5H2.5Q1.5 15.5 1.5 14.5Z" fill="#fff" stroke="#dcdcdc" stroke-width="1"/><path d="M7.8 0.5L11.8 4.5" fill="none" stroke="#e4e4e4" stroke-width="1"/></svg>
<div class="t" style="left:241.80px;top:387.26px;font-size:11.8px;line-height:16px;color:#262626;font-weight:normal;letter-spacing:0.15px;">setup-config.php</div>
<div class="t" style="right:806.80px;top:387.43px;font-size:11.3px;line-height:16px;color:#8a8a8a;font-weight:normal;text-align:right;">15 KB</div>
<div class="t" style="left:481.50px;top:387.33px;font-size:11.6px;line-height:16px;color:#8a8a8a;font-weight:normal;letter-spacing:0.38px;">5/27/16, 1:54 AM</div>
<svg style="left:221px;top:387.35px" width="13" height="16"><path d="M1.5 0.5H7.8L11.8 4.5V14.5Q11.8 15.5 10.8 15.5H2.5Q1.5 15.5 1.5 14.5Z" fill="#fff" stroke="#dcdcdc" stroke-width="1"/><path d="M7.8 0.5L11.8 4.5" fill="none" stroke="#e4e4e4" stroke-width="1"/></svg>
<div class="t" style="left:241.80px;top:405.63px;font-size:11.8px;line-height:16px;color:#262626;font-weight:normal;letter-spacing:0.15px;">themes.php</div>
<div class="t" style="right:806.80px;top:405.80px;font-size:11.3px;line-height:16px;color:#8a8a8a;font-weight:normal;text-align:right;">21 KB</div>
<div class="t" style="left:481.50px;top:405.70px;font-size:11.6px;line-height:16px;color:#8a8a8a;font-weight:normal;letter-spacing:0.38px;">7/16/16, 11:20 PM</div>
<svg style="left:221px;top:405.72px" width="13" height="16"><path d="M1.5 0.5H7.8L11.8 4.5V14.5Q11.8 15.5 10.8 15.5H2.5Q1.5 15.5 1.5 14.5Z" fill="#fff" stroke="#dcdcdc" stroke-width="1"/><path d="M7.8 0.5L11.8 4.5" fill="none" stroke="#e4e4e4" stroke-width="1"/></svg>
<div class="t" style="left:241.80px;top:424.00px;font-size:11.8px;line-height:16px;color:#262626;font-weight:normal;letter-spacing:0.15px;">tools.php</div>
<div class="t" style="right:806.80px;top:424.17px;font-size:11.3px;line-height:16px;color:#8a8a8a;font-weight:normal;text-align:right;">6 KB</div>
<div class="t" style="left:481.50px;top:424.07px;font-size:11.6px;line-height:16px;color:#8a8a8a;font-weight:normal;letter-spacing:0.38px;">8/31/15, 3:32 AM</div>
<svg style="left:221px;top:424.09px" width="13" height="16"><path d="M1.5 0.5H7.8L11.8 4.5V14.5Q11.8 15.5 10.8 15.5H2.5Q1.5 15.5 1.5 14.5Z" fill="#fff" stroke="#dcdcdc" stroke-width="1"/><path d="M7.8 0.5L11.8 4.5" fill="none" stroke="#e4e4e4" stroke-width="1"/></svg>
<div class="t" style="left:241.80px;top:442.37px;font-size:11.8px;line-height:16px;color:#262626;font-weight:normal;letter-spacing:0.15px;">users.php</div>
<div class="t" style="right:806.80px;top:442.54px;font-size:11.3px;line-height:16px;color:#8a8a8a;font-weight:normal;text-align:right;">18 KB</div>
<div class="t" style="left:481.50px;top:442.44px;font-size:11.6px;line-height:16px;color:#8a8a8a;font-weight:normal;letter-spacing:0.38px;">6/29/16, 3:16 PM</div>
<svg style="left:221px;top:442.46px" width="13" height="16"><path d="M1.5 0.5H7.8L11.8 4.5V14.5Q11.8 15.5 10.8 15.5H2.5Q1.5 15.5 1.5 14.5Z" fill="#fff" stroke="#dcdcdc" stroke-width="1"/><path d="M7.8 0.5L11.8 4.5" fill="none" stroke="#e4e4e4" stroke-width="1"/></svg>
<div class="t" style="left:241.80px;top:460.74px;font-size:11.8px;line-height:16px;color:#262626;font-weight:normal;letter-spacing:0.15px;">widgets.php</div>
<div class="t" style="right:806.80px;top:460.91px;font-size:11.3px;line-height:16px;color:#8a8a8a;font-weight:normal;text-align:right;">18 KB</div>
<div class="t" style="left:481.50px;top:460.81px;font-size:11.6px;line-height:16px;color:#8a8a8a;font-weight:normal;letter-spacing:0.38px;">6/29/16, 3:16 PM</div>
<svg style="left:221px;top:460.83px" width="13" height="16"><path d="M1.5 0.5H7.8L11.8 4.5V14.5Q11.8 15.5 10.8 15.5H2.5Q1.5 15.5 1.5 14.5Z" fill="#fff" stroke="#dcdcdc" stroke-width="1"/><path d="M7.8 0.5L11.8 4.5" fill="none" stroke="#e4e4e4" stroke-width="1"/></svg>
<div class="b" style="left:202px;top:609px;width:393px;height:18px;border-top:1px solid #ececec;background:#fff;"></div>
<div class="t" style="left:147.30px;width:500px;text-align:center;top:609.83px;font-size:10.6px;line-height:16px;color:#7a7a7a;font-weight:normal;">20 items, 10.23 GB available</div>
<div class="b" style="left:596px;top:64px;width:392px;height:25px;background:#dfe9f6;"></div>
<div class="b" style="left:987px;top:64px;width:1px;height:563px;background:#e3e3e3;"></div>
<div class="b" style="left:596px;top:609px;width:392px;height:18px;border-top:1px solid #ececec;background:#fff;"></div>
<div class="t" style="left:541.00px;width:500px;text-align:center;top:609.86px;font-size:10.5px;line-height:16px;color:#7a7a7a;font-weight:normal;">1 of 12 selected (12 MB), 10.23 GB available</div>
<div class="b" style="left:905.5px;top:616.7px;width:71.5px;height:2.5px;background:#cccccc;border-radius:1.5px;"></div>
<div class="b" style="left:905.5px;top:616.5px;width:12.5px;height:2.7000000000000455px;background:#3a93f2;border-radius:1.5px;"></div>
<div class="b" style="left:917px;top:612.8px;width:10px;height:10.0px;background:#fff;border-radius:50%;box-shadow:0 0 0 0.5px #c4c4c4,0 0.5px 1px rgba(0,0,0,.2);"></div>
<div class="t" style="left:619.50px;top:69.05px;font-size:11.4px;line-height:16px;color:#333;font-weight:normal;">System</div>
<div class="t" style="left:671.80px;top:69.05px;font-size:11.4px;line-height:16px;color:#333;font-weight:normal;">Users</div>
<div class="t" style="left:717.70px;top:69.05px;font-size:11.4px;line-height:16px;color:#333;font-weight:normal;">johnappleseed</div>
<div class="t" style="left:809.50px;top:69.05px;font-size:11.4px;line-height:16px;color:#333;font-weight:normal;">Pictures</div>
<div class="t" style="left:869.00px;top:69.05px;font-size:11.4px;line-height:16px;color:#333;font-weight:normal;">Desktop Pictures</div>
<svg style="left:664.00px;top:75px" width="5" height="6"><path d="M0.8 0.6L3.6 2.9L0.8 5.2" fill="none" stroke="#3a3a3a" stroke-width="1.3"/></svg>
<svg style="left:710.20px;top:75px" width="5" height="6"><path d="M0.8 0.6L3.6 2.9L0.8 5.2" fill="none" stroke="#3a3a3a" stroke-width="1.3"/></svg>
<svg style="left:801.70px;top:75px" width="5" height="6"><path d="M0.8 0.6L3.6 2.9L0.8 5.2" fill="none" stroke="#3a3a3a" stroke-width="1.3"/></svg>
<svg style="left:860.40px;top:75px" width="5" height="6"><path d="M0.8 0.6L3.6 2.9L0.8 5.2" fill="none" stroke="#3a3a3a" stroke-width="1.3"/></svg>
<svg style="left:601.7px;top:70px" width="14" height="14" viewBox="0 0 14 14"><defs><linearGradient id="dg" x1="0" y1="0" x2="0" y2="1"><stop offset="0" stop-color="#d8d8d8"/><stop offset="0.6" stop-color="#8a8a8a"/><stop offset="1" stop-color="#3a3a3a"/></linearGradient></defs><rect x="0" y="0" width="13.5" height="13.6" rx="1.6" fill="url(#dg)"/><rect x="3" y="3" width="7.5" height="5" fill="none" stroke="#aaa" stroke-width="0.6"/></svg>
<div class="b" style="left:607.7px;top:263.3px;width:109.19999999999993px;height:108.59999999999997px;background:#e4e4e4;border-radius:5px;"></div>
<div class="b" style="left:616.5px;top:122.4px;width:92.20000000000005px;height:60.79999999999998px;background:#fff;box-shadow:0 0 0 0.5px rgba(0,0,0,0.10),0 1px 2px rgba(0,0,0,0.22);"></div>
<svg style="left:620.70px;top:126.40px;overflow:hidden" width="83.80" height="52.80" viewBox="0 0 100 62" preserveAspectRatio="none">
<defs><linearGradient id="g4708" x1="0" y1="0" x2="0" y2="1"><stop offset="0" stop-color="#2c82dc"/><stop offset="0.5" stop-color="#a8cae8"/></linearGradient></defs>
<rect width="100" height="62" fill="url(#g4708)"/>
<path d="M20 14L30 10L38 16L46 20L50 26L58 28V44H20Z" fill="#b9c4ce"/>
<path d="M26 22L36 20L46 26L54 28L50 40L26 40Z" fill="#8a9aa8"/>
<path d="M66 2L84 0H100V34L76 32L64 26Z" fill="#d6d0c4"/>
<path d="M80 6L100 4V24L86 22Z" fill="#aaa49a"/>
<path d="M22 40L34 34L46 36L58 32L70 24L84 20L100 22V62H22Z" fill="#3f7d28"/>
<path d="M24 44L40 40L56 42L72 36L100 38V62H24Z" fill="#2d6020"/>
<path d="M22 48L46 46L70 50L100 48V62H22Z" fill="#406a48"/>
<path d="M28 52L52 50L70 58L74 62H28Z" fill="#7096b8"/>
<path d="M44 54L60 52L70 62H48Z" fill="#b6cee4"/>
<path d="M80 50L100 48V62H84Z" fill="#2a3e24"/>
<path d="M0 0H24L28 12L22 40L26 62H0Z" fill="#2a4220"/>
<path d="M10 0H16L17 62H9Z" fill="#6e3c22"/>
<path d="M0 52L18 50L30 62H0Z" fill="#8c6048"/>
</svg>
<div class="b" style="left:745.4px;top:122.4px;width:92.20000000000005px;height:60.79999999999998px;background:#fff;box-shadow:0 0 0 0.5px rgba(0,0,0,0.10),0 1px 2px rgba(0,0,0,0.22);"></div>
<svg style="left:749.60px;top:126.40px;overflow:hidden" width="83.80" height="52.80" viewBox="0 0 100 62" preserveAspectRatio="none">
<defs><linearGradient id="g4710" x1="0" y1="0" x2="1" y2="0.5"><stop offset="0" stop-color="#3a4558"/><stop offset="0.55" stop-color="#5e6470"/><stop offset="1" stop-color="#efd6b0"/></linearGradient>
<linearGradient id="c4710" x1="0" y1="0" x2="0" y2="1"><stop offset="0" stop-color="#a8744c"/><stop offset="1" stop-color="#4a3a36"/></linearGradient></defs>
<rect width="100" height="62" fill="url(#g4710)"/>
<path d="M30 0H70L64 6L46 9L30 5Z" fill="#4a76ae"/>
<path d="M0 10Q20 6 40 14Q50 18 60 16L50 24L0 22Z" fill="#48505c"/>
<path d="M58 14L78 10L100 14V24L68 24Z" fill="#e8d6c2"/>
<path d="M56 22L84 20L100 22V30L60 30Z" fill="#f0b44c"/>
<rect y="24" width="100" height="38" fill="url(#c4710)"/>
<rect x="0.0" y="29.0" width="5.6" height="33.0" fill="#c08a58"/>
<rect x="4.1" y="33.3" width="6.7" height="28.7" fill="#c08a58"/>
<rect x="10.6" y="27.7" width="5.1" height="34.3" fill="#d8a060"/>
<rect x="14.2" y="34.5" width="4.5" height="27.5" fill="#8a5e44"/>
<rect x="18.6" y="37.7" width="7.2" height="24.3" fill="#c08a58"/>
<rect x="24.8" y="45.5" width="6.0" height="16.5" fill="#c08a58"/>
<rect x="30.0" y="34.4" width="4.7" height="27.6" fill="#b07a50"/>
<rect x="33.5" y="42.3" width="5.5" height="19.7" fill="#5a4038"/>
<rect x="37.5" y="29.8" width="6.9" height="32.2" fill="#8a5e44"/>
<rect x="43.4" y="27.2" width="4.3" height="34.8" fill="#a88a78"/>
<rect x="47.1" y="41.5" width="6.7" height="20.5" fill="#6a5a58"/>
<rect x="52.9" y="32.0" width="6.3" height="30.0" fill="#5a4038"/>
<rect x="58.6" y="37.5" width="5.2" height="24.5" fill="#b07a50"/>
<rect x="63.1" y="35.0" width="5.7" height="27.0" fill="#8a5e44"/>
<rect x="67.3" y="41.1" width="6.1" height="20.9" fill="#5a4038"/>
<rect x="73.2" y="45.2" width="6.1" height="16.8" fill="#8a5e44"/>
<rect x="78.9" y="43.5" width="6.9" height="18.5" fill="#7a5440"/>
<rect x="84.4" y="35.9" width="5.8" height="26.1" fill="#6a5a58"/>
<rect x="88.6" y="31.4" width="4.5" height="30.6" fill="#8a5e44"/>
<rect x="91.8" y="38.9" width="7.5" height="23.1" fill="#6a5a58"/>
<rect x="97.7" y="39.4" width="5.9" height="22.6" fill="#c08a58"/>
<rect x="0.0" y="50.1" width="6.8" height="11.9" fill="#6a5a58"/>
<rect x="5.5" y="45.3" width="8.8" height="16.7" fill="#a88a78"/>
<rect x="13.7" y="49.0" width="9.6" height="13.0" fill="#5a4038"/>
<rect x="22.6" y="52.8" width="7.7" height="9.2" fill="#d8a060"/>
<rect x="30.8" y="48.2" width="6.4" height="13.8" fill="#7a5440"/>
<rect x="37.3" y="46.3" width="6.9" height="15.7" fill="#8a5e44"/>
<rect x="43.1" y="46.3" width="6.2" height="15.7" fill="#6a5a58"/>
<rect x="49.6" y="46.8" width="5.9" height="15.2" fill="#5a4038"/>
<rect x="55.1" y="49.7" width="6.8" height="12.3" fill="#5a4038"/>
<rect x="62.0" y="50.2" width="7.6" height="11.8" fill="#c08a58"/>
<rect x="69.1" y="53.5" width="9.4" height="8.5" fill="#b07a50"/>
<rect x="77.7" y="45.0" width="7.0" height="17.0" fill="#d8a060"/>
<rect x="83.4" y="46.1" width="5.3" height="15.9" fill="#5a4038"/>
<rect x="87.8" y="45.0" width="8.0" height="17.0" fill="#5a4038"/>
<rect x="95.5" y="50.1" width="9.7" height="11.9" fill="#8a5e44"/>
<path d="M0 26H8V56L0 58Z" fill="#e0a050" opacity="0.8"/>
</svg>
<div class="b" style="left:873.9px;top:122.4px;width:92.20000000000005px;height:60.79999999999998px;background:#fff;box-shadow:0 0 0 0.5px rgba(0,0,0,0.10),0 1px 2px rgba(0,0,0,0.22);"></div>
<svg style="left:878.10px;top:126.40px;overflow:hidden" width="83.80" height="52.80" viewBox="0 0 100 62" preserveAspectRatio="none">
<defs><linearGradient id="g4712" x1="0" y1="0" x2="0" y2="1"><stop offset="0" stop-color="#1262b6"/><stop offset="1" stop-color="#4a98d6"/></linearGradient></defs>
<rect width="100" height="62" fill="url(#g4712)"/>
<path d="M6 16Q16 10 24 16Q34 12 44 16Q56 12 70 16Q80 14 86 18V22H6Z" fill="#dfeaf5" opacity="0.85"/>
<path d="M64 2Q74 0 86 2L82 6Q72 8 64 6Z" fill="#eef4fa" opacity="0.85"/>
<path d="M14 6Q20 4 24 8L18 10Z" fill="#e6eef6" opacity="0.7"/>
<path d="M80 10L92 16L100 14V24H76Z" fill="#c4daf0" opacity="0.8"/>
<path d="M0 21H100V25H0Z" fill="#1d4c74"/>
<path d="M0 24H72L58 36L34 62H0Z" fill="#2a9ca0"/>
<path d="M0 26H42L22 40L0 46Z" fill="#1a7884"/>
<path d="M40 36L66 28L40 62H16Z" fill="#9cc4a8"/>
<path d="M72 24H100V62H36Z" fill="#d8d2c6"/>
<path d="M60 34H100V62H46Z" fill="#e2ded6"/>
</svg>
<div class="b" style="left:616.5px;top:286.6px;width:92.20000000000005px;height:61.0px;background:#fff;box-shadow:0 0 0 0.5px rgba(0,0,0,0.10),0 1px 2px rgba(0,0,0,0.22);"></div>
<svg style="left:620.70px;top:290.60px;overflow:hidden" width="83.80" height="53.00" viewBox="0 0 100 62" preserveAspectRatio="none">
<defs><linearGradient id="g4715" x1="0" y1="0" x2="0" y2="1"><stop offset="0" stop-color="#1a8ae6"/><stop offset="0.5" stop-color="#56a8ec"/></linearGradient></defs>
<rect width="100" height="62" fill="url(#g4715)"/>
<path d="M0 3Q5 2 7 5Q11 8 14 9Q18 8 21 10Q25 12 24 15Q20 17 14 15Q8 16 0 14Z" fill="#f4f6f8"/>
<path d="M30 11Q33 8 37 9Q42 6 47 7Q53 6 57 8Q64 5 70 7Q76 6 80 8Q86 6 89 8Q88 16 80 20Q72 24 66 27L50 29Q40 28 34 24Q27 20 28 15Z" fill="#f5f7f9"/>
<path d="M45 17Q55 14 62 19Q70 20 72 22L60 27H46Z" fill="#c9d0da"/>
<path d="M0 11L6 12L10 12L14 14L19 16L24 18L29 20L33 21L37 22L41 22L45 26L50 29L52 32H0Z" fill="#2d5a80"/>
<path d="M20 16L26 19L31 23L34 30L24 30L18 24Z" fill="#8aa0b4"/>
<path d="M33 22L40 22L44 26L40 28L36 27Z" fill="#6a8aa6"/>
<path d="M4 14L10 13L14 18L8 22L2 20Z" fill="#3d6a90"/>
<path d="M46 27L52 25L58 27L64 28L66 31H44Z" fill="#8ea6be"/>
<path d="M66 27L74 21L82 15L90 6L94 1L100 3V32H62Z" fill="#9c9a96"/>
<path d="M70 25L80 18L88 12L96 8L100 10V22L88 26L74 30Z" fill="#b5b2ab"/>
<path d="M68 30L82 26L92 22L100 18V32H66Z" fill="#6f8a5a"/>
<path d="M0 31H80V42H0Z" fill="#1d5b88"/>
<path d="M3 31H80V32H3Z" fill="#2aa09c"/>
<path d="M0 34L4 30L8 28L12 31L16 34L20 38L22 36L26 40L30 42L34 41L38 38L42 42L46 43L50 40L54 37L58 40L62 39L66 41L72 42L76 38L80 30L84 27L88 28L92 26L96 28L100 27V62H0Z" fill="#2e5424"/>
<path d="M0 50L10 47L20 48L30 46L40 48L50 46L60 48L70 47L80 48L90 46L100 47V62H0Z" fill="#5a8a2a"/>
<path d="M0 56L20 54L40 56L60 53L80 55L100 54V62H0Z" fill="#98b452"/>
<path d="M8 36L12 30L16 36L14 48L8 48Z" fill="#234a22"/>
<path d="M84 30L90 26L96 32L94 46L86 46Z" fill="#244d22"/>
</svg>
<div class="b" style="left:745.4px;top:286.6px;width:92.20000000000005px;height:61.0px;background:#fff;box-shadow:0 0 0 0.5px rgba(0,0,0,0.10),0 1px 2px rgba(0,0,0,0.22);"></div>
<svg style="left:749.60px;top:290.60px;overflow:hidden" width="83.80" height="53.00" viewBox="0 0 100 62" preserveAspectRatio="none">
<defs><linearGradient id="g4716" x1="0" y1="0" x2="0" y2="1"><stop offset="0" stop-color="#2574d4"/><stop offset="0.6" stop-color="#7fb6e8"/></linearGradient></defs>
<rect width="100" height="62" fill="url(#g4716)"/>
<path d="M18 2Q26 0 32 4Q36 10 42 12Q48 20 56 22L40 26L24 18Z" fill="#f0f4f8"/>
<path d="M62 10Q74 6 84 4Q94 2 100 6V24L80 28L66 26Q60 20 62 14Z" fill="#e6eef6"/>
<path d="M36 4Q42 2 48 4L46 8Q40 8 36 6Z" fill="#f4f6f8"/>
<path d="M42 30L50 24L56 27L62 23L70 26L78 22L88 26L100 24V40H42Z" fill="#6f8196"/>
<path d="M50 28L56 25L60 30L66 27L72 31L60 36H48Z" fill="#c9d4de"/>
<path d="M0 2L8 6L18 14L28 22L38 30L46 38L52 42L40 46H0Z" fill="#2c3238"/>
<path d="M2 20L14 24L26 32L38 40L30 44L6 42Z" fill="#8e8884"/>
<path d="M58 40L72 34L86 30L100 28V56L60 46Z" fill="#1f2d22"/>
<path d="M0 44L40 42L60 44L100 54V62H0Z" fill="#2596ae"/>
<path d="M16 46L52 45L70 50L40 56L18 54Z" fill="#45bcc6"/>
<path d="M28 58L42 53L56 55L72 54L100 58V62H26Z" fill="#6c6058"/>
<path d="M0 42L9 42L10 62H0Z" fill="#1c2622"/>
<path d="M34 46L37 46L36 62H33Z" fill="#1c2a22"/>
</svg>
<div class="b" style="left:873.9px;top:286.6px;width:92.20000000000005px;height:61.0px;background:#fff;box-shadow:0 0 0 0.5px rgba(0,0,0,0.10),0 1px 2px rgba(0,0,0,0.22);"></div>
<svg style="left:878.10px;top:290.60px;overflow:hidden" width="83.80" height="53.00" viewBox="0 0 100 62" preserveAspectRatio="none">
<rect width="100" height="62" fill="#467a2e"/>
<path d="M0 0H100V18L70 24H30L0 16Z" fill="#4f8c2e"/>
<path d="M34 0L50 6L66 0V12L58 20L42 20L34 12Z" fill="#86b850"/>
<path d="M0 4L12 8L20 4L28 10V20L0 26Z" fill="#2c521c"/>
<path d="M84 4L100 0V26L84 22Z" fill="#2c521c"/>
<path d="M4 16L10 12L16 18L22 12L28 20L34 18L44 28L40 44L26 52L10 54L0 58V22Z" fill="#9a5a40"/>
<path d="M8 18L14 16L16 52L9 54Z" fill="#b8764e"/>
<path d="M22 20L28 20L29 48L23 50Z" fill="#7a4632"/>
<path d="M32 22L36 22L37 44L33 46Z" fill="#c08058"/>
<path d="M62 20L70 14L78 18L86 26L84 42L70 38L62 30Z" fill="#9a624a"/>
<path d="M70 18L74 18L76 40L72 40Z" fill="#b87a56"/>
<path d="M90 14L100 10V54L92 52Z" fill="#7e4a34"/>
<path d="M0 58L38 34L47 29L14 62H0Z" fill="#72b040"/>
<path d="M54 29L62 32L100 50V62H90Z" fill="#72b040"/>
<path d="M47 28H54L90 62H14Z" fill="#454548"/>
<path d="M50.2 30H51L52.5 62H49Z" fill="#d0d0d0"/>
</svg>
<div class="b" style="left:616.5px;top:453.0px;width:92.20000000000005px;height:56.39999999999998px;background:#fff;box-shadow:0 0 0 0.5px rgba(0,0,0,0.10),0 1px 2px rgba(0,0,0,0.22);"></div>
<svg style="left:620.70px;top:457.00px;overflow:hidden" width="83.80" height="48.40" viewBox="0 0 100 62" preserveAspectRatio="none">
<defs><linearGradient id="g4909" x1="0" y1="0" x2="0" y2="1"><stop offset="0" stop-color="#1a58b0"/><stop offset="0.7" stop-color="#5ea6e2"/></linearGradient></defs>
<rect width="100" height="62" fill="url(#g4909)"/>
<path d="M34 38Q40 30 52 28Q58 22 68 20Q76 16 86 22Q92 26 96 30Q100 34 100 40H34Z" fill="#f4f6f8"/>
<path d="M0 36H100V42H0Z" fill="#c8d6e2"/>
<path d="M70 36L78 30L88 30L92 38H68Z" fill="#b06a3e"/>
<path d="M0 40L40 40L100 38V62H0Z" fill="#d99556"/>
<path d="M0 50L50 48L100 50V62H0Z" fill="#e4aa6e"/>
<path d="M4 46L10 36L12 24L16 14L22 6L28 5L34 12L36 26L38 44L32 46L30 28L28 18L24 14L20 20L18 32L16 44L10 50Z" fill="#a4552e"/>
<path d="M0 46L18 44L30 50L10 54Z" fill="#8e4a2a"/>
</svg>
<div class="b" style="left:745.4px;top:451.0px;width:92.20000000000005px;height:60.80000000000001px;background:#fff;box-shadow:0 0 0 0.5px rgba(0,0,0,0.10),0 1px 2px rgba(0,0,0,0.22);"></div>
<svg style="left:749.60px;top:455.00px;overflow:hidden" width="83.80" height="52.80" viewBox="0 0 100 62" preserveAspectRatio="none">
<rect width="100" height="62" fill="#56607a"/>
<path d="M0 0H30L24 8L0 12Z" fill="#3e74c0"/>
<path d="M20 4Q30 0 44 6Q56 2 70 8Q84 4 100 10V24L20 22Z" fill="#85848a"/>
<path d="M60 0H100V12Q86 8 72 10Z" fill="#3a3e4c"/>
<path d="M0 12L30 10L60 14L100 18V26L0 28Z" fill="#7a6a60"/>
<path d="M0 22L40 20L100 18V32L0 34Z" fill="#dcb23c"/>
<path d="M30 24L100 22V30L40 32Z" fill="#eec23a"/>
<path d="M0 32L40 30L100 28V62H0Z" fill="#5c8e2c"/>
<path d="M0 36L30 34L60 32L100 30V40L50 40L0 42Z" fill="#2e4a1e"/>
<path d="M0 42L50 40L100 42V62H0Z" fill="#6a9a34"/>
<path d="M60 40L100 36V62H64Z" fill="#2a3c1a"/>
<path d="M0 54L40 52L62 62H0Z" fill="#3e6422"/>
</svg>
<div class="b" style="left:873.9px;top:453.0px;width:92.20000000000005px;height:56.39999999999998px;background:#fff;box-shadow:0 0 0 0.5px rgba(0,0,0,0.10),0 1px 2px rgba(0,0,0,0.22);"></div>
<svg style="left:878.10px;top:457.00px;overflow:hidden" width="83.80" height="48.40" viewBox="0 0 100 62" preserveAspectRatio="none">
<rect width="100" height="62" fill="#2a86dc"/>
<path d="M14 6Q22 0 32 4Q38 10 34 16Q24 18 18 14Z" fill="#eef2f6"/>
<path d="M30 20Q40 18 48 22L44 30L32 30Z" fill="#dfe6ee"/>
<path d="M0 8L10 6L20 12L28 22L36 30L44 36L40 46H0Z" fill="#2a2418"/>
<path d="M44 0H100V46L70 44L54 36L40 28Z" fill="#a62a1a"/>
<path d="M64 0H100V22L84 18L70 8Z" fill="#5a1e14"/>
<path d="M70 20L90 22L100 30V40L82 38Z" fill="#c23a20"/>
<path d="M0 44H60V62H0Z" fill="#141410"/>
<path d="M24 44L58 42L62 62H28Z" fill="#4c7cae"/>
<path d="M34 48L56 46L58 58L38 58Z" fill="#86aad0"/>
<path d="M56 40L100 40V62H58Z" fill="#5e3e30"/>
<path d="M62 44L80 42L86 52L66 54Z" fill="#b8583a"/>
<path d="M12 52L42 50L42 54L14 56Z" fill="#c0c0b8"/>
</svg>
<div class="b" style="left:615.6px;top:379.7px;width:93.5px;height:29.19999999999999px;background:#1b6fd8;border-radius:5px;"></div>
<div class="t" style="left:412.60px;width:500px;text-align:center;top:215.82px;font-size:11.5px;line-height:16px;color:#2a2a2a;font-weight:normal;letter-spacing:0.1px;">Desktop Picture</div>
<div class="t" style="left:412.60px;width:500px;text-align:center;top:230.32px;font-size:11.5px;line-height:16px;color:#2a2a2a;font-weight:normal;letter-spacing:0.35px;">4708.jpg</div>
<div class="t" style="left:541.50px;width:500px;text-align:center;top:215.82px;font-size:11.5px;line-height:16px;color:#2a2a2a;font-weight:normal;letter-spacing:0.1px;">Desktop Picture</div>
<div class="t" style="left:541.50px;width:500px;text-align:center;top:230.32px;font-size:11.5px;line-height:16px;color:#2a2a2a;font-weight:normal;letter-spacing:0.35px;">4710.jpg</div>
<div class="t" style="left:670.00px;width:500px;text-align:center;top:215.82px;font-size:11.5px;line-height:16px;color:#2a2a2a;font-weight:normal;letter-spacing:0.1px;">Desktop Picture</div>
<div class="t" style="left:670.00px;width:500px;text-align:center;top:230.32px;font-size:11.5px;line-height:16px;color:#2a2a2a;font-weight:normal;letter-spacing:0.35px;">4712.jpg</div>
<div class="t" style="left:412.60px;width:500px;text-align:center;top:380.42px;font-size:11.5px;line-height:16px;color:#fff;font-weight:normal;letter-spacing:0.1px;">Desktop Picture</div>
<div class="t" style="left:412.60px;width:500px;text-align:center;top:393.92px;font-size:11.5px;line-height:16px;color:#fff;font-weight:normal;letter-spacing:0.35px;">4715.jpg</div>
<div class="t" style="left:541.50px;width:500px;text-align:center;top:380.42px;font-size:11.5px;line-height:16px;color:#2a2a2a;font-weight:normal;letter-spacing:0.1px;">Desktop Picture</div>
<div class="t" style="left:541.50px;width:500px;text-align:center;top:393.92px;font-size:11.5px;line-height:16px;color:#2a2a2a;font-weight:normal;letter-spacing:0.35px;">4716.jpg</div>
<div class="t" style="left:670.00px;width:500px;text-align:center;top:380.42px;font-size:11.5px;line-height:16px;color:#2a2a2a;font-weight:normal;letter-spacing:0.1px;">Desktop Picture</div>
<div class="t" style="left:670.00px;width:500px;text-align:center;top:393.92px;font-size:11.5px;line-height:16px;color:#2a2a2a;font-weight:normal;letter-spacing:0.35px;">4719.jpg</div>
<div class="t" style="left:412.60px;width:500px;text-align:center;top:544.82px;font-size:11.5px;line-height:16px;color:#2a2a2a;font-weight:normal;letter-spacing:0.1px;">Desktop Picture</div>
<div class="t" style="left:412.60px;width:500px;text-align:center;top:559.22px;font-size:11.5px;line-height:16px;color:#2a2a2a;font-weight:normal;letter-spacing:0.35px;">4909.jpg</div>
<div class="t" style="left:541.50px;width:500px;text-align:center;top:544.82px;font-size:11.5px;line-height:16px;color:#2a2a2a;font-weight:normal;letter-spacing:0.1px;">Desktop Picture</div>
<div class="t" style="left:541.50px;width:500px;text-align:center;top:559.22px;font-size:11.5px;line-height:16px;color:#2a2a2a;font-weight:normal;letter-spacing:0.35px;">4912.jpg</div>
<div class="t" style="left:670.00px;width:500px;text-align:center;top:544.82px;font-size:11.5px;line-height:16px;color:#2a2a2a;font-weight:normal;letter-spacing:0.1px;">Desktop Picture</div>
<div class="t" style="left:670.00px;width:500px;text-align:center;top:559.22px;font-size:11.5px;line-height:16px;color:#2a2a2a;font-weight:normal;letter-spacing:0.35px;">5525.jpg</div>
<svg style="left:997.80px;top:188.80px;overflow:hidden" width="221.20" height="137.20" viewBox="0 0 100 62" preserveAspectRatio="none">
<defs><linearGradient id="g4715b" x1="0" y1="0" x2="0" y2="1"><stop offset="0" stop-color="#1a8ae6"/><stop offset="0.5" stop-color="#56a8ec"/></linearGradient></defs>
<rect width="100" height="62" fill="url(#g4715b)"/>
<path d="M0 3Q5 2 7 5Q11 8 14 9Q18 8 21 10Q25 12 24 15Q20 17 14 15Q8 16 0 14Z" fill="#f4f6f8"/>
<path d="M30 11Q33 8 37 9Q42 6 47 7Q53 6 57 8Q64 5 70 7Q76 6 80 8Q86 6 89 8Q88 16 80 20Q72 24 66 27L50 29Q40 28 34 24Q27 20 28 15Z" fill="#f5f7f9"/>
<path d="M45 17Q55 14 62 19Q70 20 72 22L60 27H46Z" fill="#c9d0da"/>
<path d="M0 11L6 12L10 12L14 14L19 16L24 18L29 20L33 21L37 22L41 22L45 26L50 29L52 32H0Z" fill="#2d5a80"/>
<path d="M20 16L26 19L31 23L34 30L24 30L18 24Z" fill="#8aa0b4"/>
<path d="M33 22L40 22L44 26L40 28L36 27Z" fill="#6a8aa6"/>
<path d="M4 14L10 13L14 18L8 22L2 20Z" fill="#3d6a90"/>
<path d="M46 27L52 25L58 27L64 28L66 31H44Z" fill="#8ea6be"/>
<path d="M66 27L74 21L82 15L90 6L94 1L100 3V32H62Z" fill="#9c9a96"/>
<path d="M70 25L80 18L88 12L96 8L100 10V22L88 26L74 30Z" fill="#b5b2ab"/>
<path d="M68 30L82 26L92 22L100 18V32H66Z" fill="#6f8a5a"/>
<path d="M0 31H80V42H0Z" fill="#1d5b88"/>
<path d="M3 31H80V32H3Z" fill="#2aa09c"/>
<path d="M0 34L4 30L8 28L12 31L16 34L20 38L22 36L26 40L30 42L34 41L38 38L42 42L46 43L50 40L54 37L58 40L62 39L66 41L72 42L76 38L80 30L84 27L88 28L92 26L96 28L100 27V62H0Z" fill="#2e5424"/>
<path d="M0 50L10 47L20 48L30 46L40 48L50 46L60 48L70 47L80 48L90 46L100 47V62H0Z" fill="#5a8a2a"/>
<path d="M0 56L20 54L40 56L60 53L80 55L100 54V62H0Z" fill="#98b452"/>
<path d="M8 36L12 30L16 36L14 48L8 48Z" fill="#234a22"/>
<path d="M84 30L90 26L96 32L94 46L86 46Z" fill="#244d22"/>
</svg>
<div class="t" style="left:860.60px;width:500px;text-align:center;top:453.16px;font-size:15.7px;line-height:16px;color:#2a2a2a;font-weight:normal;">Desktop Picture 4715.jpg</div>
<div class="t" style="right:187.60px;top:485.00px;font-size:10.4px;line-height:16px;color:#9a9a9a;font-weight:normal;text-align:right;letter-spacing:0.4px;">Kind:</div>
<div class="t" style="left:1099.10px;top:485.00px;font-size:10.4px;line-height:16px;color:#2a2a2a;font-weight:normal;letter-spacing:0px;">JPEG image</div>
<div class="t" style="right:187.60px;top:500.75px;font-size:10.4px;line-height:16px;color:#9a9a9a;font-weight:normal;text-align:right;letter-spacing:0.4px;">Size:</div>
<div class="t" style="left:1099.10px;top:500.75px;font-size:10.4px;line-height:16px;color:#2a2a2a;font-weight:normal;letter-spacing:0.1px;">12 MB</div>
<div class="t" style="right:187.60px;top:516.50px;font-size:10.4px;line-height:16px;color:#9a9a9a;font-weight:normal;text-align:right;letter-spacing:0.4px;">Created:</div>
<div class="t" style="left:1099.10px;top:516.50px;font-size:10.4px;line-height:16px;color:#2a2a2a;font-weight:normal;letter-spacing:0px;">Aug 12, 2016, 12:47 PM</div>
<div class="t" style="right:187.60px;top:532.25px;font-size:10.4px;line-height:16px;color:#9a9a9a;font-weight:normal;text-align:right;letter-spacing:0.4px;">Modified:</div>
<div class="t" style="left:1099.10px;top:532.25px;font-size:10.4px;line-height:16px;color:#2a2a2a;font-weight:normal;letter-spacing:0px;">Aug 12, 2016, 12:47 PM</div>
<div class="t" style="right:187.60px;top:548.00px;font-size:10.4px;line-height:16px;color:#9a9a9a;font-weight:normal;text-align:right;letter-spacing:0.4px;">Permissions:</div>
<div class="t" style="left:1099.10px;top:548.00px;font-size:10.4px;line-height:16px;color:#2a2a2a;font-weight:normal;letter-spacing:0.65px;">rw-r--r-- (644)</div>
<div class="t" style="right:187.60px;top:563.75px;font-size:10.4px;line-height:16px;color:#9a9a9a;font-weight:normal;text-align:right;letter-spacing:0.4px;">Owner:</div>
<div class="t" style="left:1099.10px;top:563.75px;font-size:10.4px;line-height:16px;color:#2a2a2a;font-weight:normal;letter-spacing:0.15px;">johnappleseed</div>
<div class="t" style="right:187.60px;top:579.50px;font-size:10.4px;line-height:16px;color:#9a9a9a;font-weight:normal;text-align:right;letter-spacing:0.4px;">Group:</div>
<div class="t" style="left:1099.10px;top:579.50px;font-size:10.4px;line-height:16px;color:#2a2a2a;font-weight:normal;letter-spacing:0.4px;">staff</div>
<div class="t" style="right:187.60px;top:595.25px;font-size:10.4px;line-height:16px;color:#9a9a9a;font-weight:normal;text-align:right;letter-spacing:0.4px;">Dimensions:</div>
<div class="t" style="left:1099.10px;top:595.25px;font-size:10.4px;line-height:16px;color:#2a2a2a;font-weight:normal;letter-spacing:0.45px;">3840 x 2400</div>
</body></html>
